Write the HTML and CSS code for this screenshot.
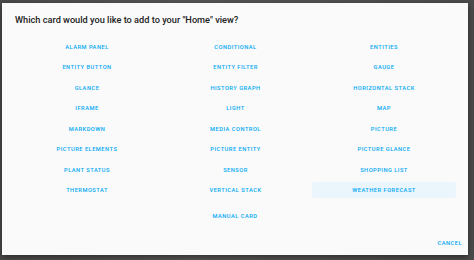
FILE: index.html
```html
<!DOCTYPE html>
<html>
<head>
<meta charset="utf-8">
<link rel="stylesheet" href="styles.css">
</head>
<body>
<div class="backdrop">
  <div class="dialog">
    <h2 class="title">Which card would you like to add to your "Home" view?</h2>
    <div class="grid">
      <button class="btn">Alarm panel</button>
      <button class="btn">Conditional</button>
      <button class="btn">Entities</button>
      <button class="btn">Entity button</button>
      <button class="btn">Entity filter</button>
      <button class="btn">Gauge</button>
      <button class="btn">Glance</button>
      <button class="btn">History graph</button>
      <button class="btn">Horizontal stack</button>
      <button class="btn">iFrame</button>
      <button class="btn">Light</button>
      <button class="btn">Map</button>
      <button class="btn">Markdown</button>
      <button class="btn">Media control</button>
      <button class="btn">Picture</button>
      <button class="btn">Picture elements</button>
      <button class="btn">Picture entity</button>
      <button class="btn">Picture glance</button>
      <button class="btn">Plant status</button>
      <button class="btn">Sensor</button>
      <button class="btn">Shopping list</button>
      <button class="btn">Thermostat</button>
      <button class="btn">Vertical stack</button>
      <button class="btn btn-hover">Weather forecast</button>
    </div>
    <div class="manual">
      <button class="btn">Manual card</button>
    </div>
    <div class="actions">
      <button class="btn btn-cancel">Cancel</button>
    </div>
  </div>
</div>
</body>
</html>
```

FILE: styles.css
```css
html, body {
  margin: 0;
  padding: 0;
}
body {
  width: 474px;
  height: 260px;
  overflow: hidden;
  background: #4f4f4f;
  font-family: Roboto, "Noto Sans", sans-serif;
}
.backdrop {
  width: 474px;
  height: 260px;
  padding: 3px 0 0 2px;
  box-sizing: border-box;
  background: linear-gradient(90deg, #4a4a4a 0%, #555 40%, #4b4b4b 100%);
}
.dialog {
  width: 466px;
  height: 252px;
  background: #fafafa;
  box-shadow: 0 2px 6px rgba(0, 0, 0, 0.45);
  display: flex;
  flex-direction: column;
  box-sizing: border-box;
}
.title {
  margin: 0;
  padding: 11px 13px 0;
  font-size: 9.2px;
  line-height: 12px;
  font-weight: 500;
  color: #212121;
}
.grid {
  margin-top: 12.7px;
  padding-left: 13px;
  display: grid;
  grid-template-columns: repeat(3, 144px);
  column-gap: 4.5px;
  row-gap: 4.5px;
}
.btn {
  height: 16px;
  border: 0;
  margin: 0;
  padding: 0 4px;
  background: transparent;
  color: #03a9f4;
  font-family: Roboto, "Noto Sans", sans-serif;
  font-size: 5.7px;
  font-weight: 500;
  letter-spacing: 0.5px;
  text-transform: uppercase;
  border-radius: 2px;
  cursor: pointer;
}
.btn-hover {
  background: #eaf5fc;
}
.manual {
  margin-top: 9.5px;
  display: flex;
  justify-content: center;
}
.actions {
  margin-top: auto;
  padding: 0 2px 4.3px 0;
  display: flex;
  justify-content: flex-end;
}
.btn-cancel {
  padding: 0 4px;
}
```
